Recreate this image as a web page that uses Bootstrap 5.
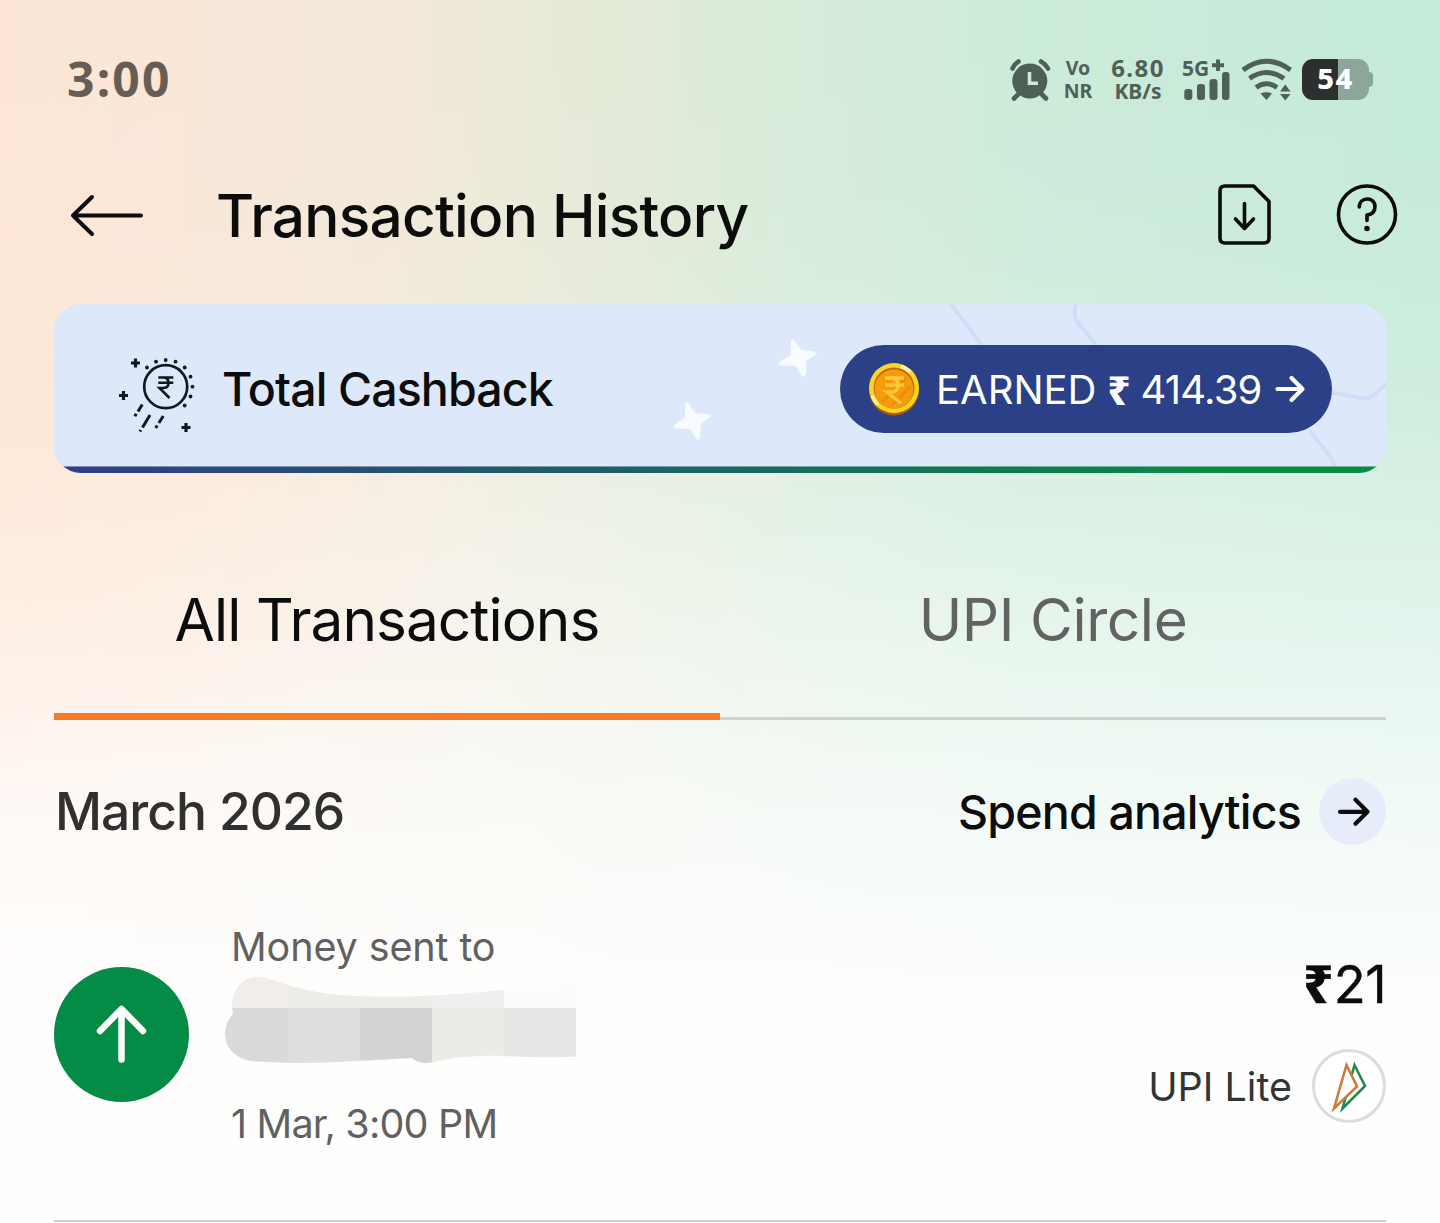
<!DOCTYPE html>
<html lang="en">
<head>
<meta charset="utf-8">
<meta name="viewport" content="width=device-width, initial-scale=1">
<title>Transaction History</title>
<link href="https://cdn.jsdelivr.net/npm/bootstrap@5.3.0/dist/css/bootstrap.min.css" rel="stylesheet">
<style>
body{font-family:Inter,"Noto Sans",sans-serif;color:#0b0c0b;white-space:nowrap;min-height:1223px;line-height:1;overflow:hidden;
background:radial-gradient(ellipse 480px 330px at 0 480px,rgba(254,228,208,.4),rgba(254,228,208,0)),linear-gradient(180deg,rgba(255,255,255,0) 0,rgba(255,255,255,.04) 200px,rgba(255,255,255,.18) 400px,rgba(255,255,255,.48) 600px,rgba(255,255,255,.76) 800px,rgba(255,255,255,.95) 1000px,#fefefe 1150px),linear-gradient(90deg,#fde6d6 0,#f9e7d8 200px,#f0e9d9 440px,#e3ead8 620px,#d8ebd9 780px,#ccebd9 1020px,#c5ead8 1440px)}
svg{display:block;flex:none;overflow:visible}
.ink{fill:none;stroke:currentColor;stroke-linecap:round;stroke-linejoin:round}
.rupee{font-family:"Noto Sans",sans-serif;font-weight:800;letter-spacing:0}
.status-bar{height:158px;padding:0 67px;font-family:"Noto Sans",sans-serif;font-weight:700;color:#4f6056}
.clock{font-size:48px;color:#665e55;letter-spacing:2.2px}
.duo{height:44px;padding-top:1px;text-align:center;justify-content:space-between}
.duo span{line-height:20px;display:block}
.vo{width:30px;margin-left:12px;font-size:19.500px}
.rate{width:56px;margin-left:17px;font-size:21px}
.rate .fig{font-size:24px;letter-spacing:1.400px}
.cell{width:48px;margin-left:16px;text-align:left;font-size:21px}
.wifi{margin-left:12px}
.battery{width:67px;height:41px;border-radius:11px;margin:0 4px 0 10px;background:linear-gradient(90deg,#2b302e 36px,#8ea69a 36px);color:#fff;font-size:29px;font-weight:800;position:relative;letter-spacing:1.500px;padding-bottom:4px}
.battery::after{content:"";position:absolute;left:67px;top:13px;width:4px;height:15px;border-radius:0 4px 4px 0;background:#8ea69a}
.title-bar{height:114px;padding:0 42px 0 70px}
.screen-title{font-size:58.500px;font-weight:450;letter-spacing:-.75px;margin-left:72px;padding-top:2px}
.help{margin-left:65px}
.cashback{height:169px;border-radius:27px;background:#dee8fb;margin:32px 54px 0;padding:0 54px 0 64px;overflow:hidden;position:relative}
.cashback .art{position:absolute;left:0;top:0}
.cashback .stripe{position:absolute;left:0;right:0;bottom:0;height:7px;background:linear-gradient(90deg,#303f88 0,#255270 25%,#1d6167 45%,#157159 62%,#0b8749 85%,#088a47 100%);border-top:1px solid rgba(255,255,255,.4)}
.burst{margin-top:10px}
.cash-label{font-size:46.500px;font-weight:450;letter-spacing:-.9px;margin-left:27px;padding-top:2px}
.earned{width:492px;height:88px;padding:0 27px 0 28px;background:#2b4087;color:#fff;font-size:40px;position:relative}
.earned span{padding-top:2px}
.earned .rupee{margin-left:11px}
.earned .value{letter-spacing:-.8px;margin-left:10px}
.tabs{margin:47px 54px 0;height:200px;border-bottom:3px solid #cfd1cf;font-size:58.500px;letter-spacing:-.95px}
.tabs .nav-link{color:#616261;padding:0;height:200px;border-radius:0;line-height:199px}
.tabs .nav-link+.nav-link{letter-spacing:-.4px}
.tabs .nav-link.active{color:#0b0c0b;border-bottom:7px solid #f47b27}
.month-row{margin:57px 54px 0;height:69px}
.month{font-size:51.500px;color:#2f302f;font-weight:450;letter-spacing:-.95px;margin-left:1px}
.spend{font-size:46.500px;font-weight:450;letter-spacing:-.8px;padding-top:2px}
.go{width:67px;height:67px;margin-left:18px;background:linear-gradient(180deg,#e4effa,#e8ebfa)}
.txn{margin:0 54px;height:376px;padding-top:80px;border-bottom:2px solid #cfcfcf}
.sent{width:135px;height:135px;background:#048c46;color:#fff;margin-top:41px}
.detail{margin-left:42px}
.detail .smudge{margin:9px 0 39px -6px}
.sub{font-size:39.500px;color:#616161;line-height:42px;letter-spacing:-.1px}
.when{letter-spacing:-.8px}
.amount{font-size:52.500px;font-weight:400;line-height:54px;margin-top:30px;letter-spacing:-.5px;-webkit-text-stroke:.4px}
.lite{font-size:39.500px;color:#333534;margin-top:38px}
.lite span{padding-top:3px}
.lite-logo{width:74px;height:74px;border:3px solid #d9dce3;background:#fff;margin-left:20px}
</style>
</head>
<body>
<header class="status-bar d-flex align-items-center justify-content-between">
  <span class="clock">3:00</span>
  <div class="d-flex align-items-center">
    <svg width="42" height="44" viewBox="1009 57 42 44"><circle cx="1029.800" cy="81" r="17.500" fill="#4f6056"/><g class="ink" stroke-width="4.600"><path d="M1012.500 68.500Q1014.500 64 1018.500 61.500M1041 61.500Q1045.500 64 1048 68.500M1014 98.500 1018.500 94M1046 98.500 1041.500 94"/></g><path d="M1029.500 72v11.200h8.500" fill="none" stroke="#cdebdc" stroke-width="3.600"/></svg>
    <div class="duo vo d-flex flex-column"><span>Vo</span><span>NR</span></div>
    <div class="duo rate d-flex flex-column"><span class="fig">6.80</span><span>KB/s</span></div>
    <div class="duo cell d-flex flex-column"><span>5G</span>
      <svg width="48" height="1" viewBox="1182 100 48 1"><g fill="#4f6056"><rect x="1184.300" y="89" width="8" height="11" rx="3"/><rect x="1197" y="84" width="8" height="16" rx="3"/><rect x="1209.500" y="79" width="8" height="21" rx="3"/><rect x="1222" y="72" width="7.500" height="28" rx="3"/></g><path d="M1218 59.500v11.500M1212 65.300h12" stroke="#4f6056" stroke-width="4"/></svg></div>
    <svg class="wifi" width="50" height="44" viewBox="1242 57 50 44"><g fill="none" stroke="#4f6056" stroke-width="5"><path d="M1243 70Q1266.500 52.500 1290.500 70M1249.500 78.500Q1266.500 66.500 1284 78.500M1256 87.500Q1266.500 80 1277 87.500"/></g><path d="M1260.500 93.500Q1266.500 91 1272 93.500L1266.500 100ZM1280 91.500h10.500L1285.300 84.500ZM1280 94h10.500L1285.300 100.500Z" fill="#4f6056"/></svg>
    <div class="battery d-flex align-items-center justify-content-center"><span>54</span></div>
  </div>
</header>
<div class="title-bar d-flex align-items-center">
  <svg width="74" height="44" viewBox="70 193 74 44" class="ink" stroke-width="4"><path d="M92 197 73 215.500 92 234M73 215.500H141"/></svg>
  <h1 class="screen-title mb-0">Transaction History</h1>
  <svg class="ink ms-auto" width="54" height="62" viewBox="1217 184 54 62" stroke-width="3.600"><path d="M1253.500 186H1225Q1220 186 1220 191V238Q1220 243 1225 243H1264Q1269 243 1269 238V201.500ZM1244.500 203.500V228M1235.500 219 1244.500 228.500 1253.500 219"/></svg>
  <svg class="ink help" width="62" height="62" viewBox="1336 184 62 62" stroke-width="3.600"><circle cx="1367" cy="214.500" r="28.500"/><path d="M1359.300 207C1359.300 196.500 1375 196.500 1375 206.500C1375 213 1371 214.500 1367 215V220.500"/><circle cx="1367" cy="228.500" r="2.800" fill="currentColor" stroke="none"/></svg>
</div>
<section class="cashback d-flex align-items-center">
  <svg class="art" width="1332" height="169" viewBox="54 304 1332 169"><g fill="none" stroke="#d0ddf8" stroke-width="4"><path d="M950 303 979 341Q981 344 981 350M1076 303Q1074 314 1075 317 1076 320 1079 324L1102 352M1322 391 1362 398Q1370 399 1374 395L1388 383M1309 430 1332 459Q1334.500 462 1333 470"/></g><g id="spark"><path d="M791 341Q792 338 794 340L801 350 814.500 351.500Q818 352 815.500 354.500L806.500 361 806 374Q804.500 379 801.500 375.500L796 366 781 365.500Q777.500 364.500 780.500 361.500L790.500 355Z" fill="#f8fbff"/></g><use href="#spark" x="-105.700" y="63"/></svg>
  <svg class="burst" width="77" height="76" viewBox="118 356 77 76"><g fill="none" stroke="#111820"><circle cx="165.700" cy="386.700" r="21.500" stroke-width="2.700"/><path d="M135.500 358.500v9M131 363h9M123.500 391v9M119 395.500h9M186 423v9M181.500 427.500h9" stroke-width="3.200"/><path d="M142.300 404.500 138 411.500M150 415 142.500 427.500M163.300 416 158.800 423M136.300 413.700 134.800 416.300M140.700 430 139.900 431.500M157.200 425.500 155.700 428" stroke-width="3"/><path d="M158.300 377.500H173.300M158.300 382.700H173.300M160 377.500H163Q168.500 377.500 168.500 382.700T163 388H159.500L169.500 398" stroke-width="2.600"/></g><g fill="#111820"><circle cx="147" cy="367.500" r="1.900"/><circle cx="156" cy="361.700" r="1.900"/><circle cx="165.700" cy="360" r="1.900"/><circle cx="175.500" cy="361.700" r="1.900"/><circle cx="184.700" cy="367.500" r="1.900"/><circle cx="190.500" cy="376.700" r="1.900"/><circle cx="192.500" cy="386.700" r="1.900"/><circle cx="190.500" cy="396.500" r="1.900"/><circle cx="184.700" cy="405.500" r="1.900"/></g></svg>
  <span class="cash-label">Total Cashback</span>
  <div class="earned rounded-pill d-flex align-items-center ms-auto">
    <svg width="52" height="54" viewBox="868 362 52 54"><clipPath id="rim"><circle cx="894" cy="388" r="25"/></clipPath><ellipse cx="894" cy="390" rx="25" ry="25.500" fill="#a5620c"/><circle cx="894" cy="388" r="25" fill="#ffd226"/><path d="M901 366 910 372M871.500 396 877 405" stroke="#fff0a0" stroke-width="5" clip-path="url(#rim)"/><circle cx="894" cy="388" r="20.500" fill="#b86a08"/><circle cx="894" cy="389" r="19.500" fill="#f59c0d"/><path d="M882 402 907 377M891 406 911 386" stroke="#ee8f06" stroke-width="3"/><path d="M885 378H904M885 385H904M887 378H891Q898 378 898 385T891 392H886.500L901 403" fill="none" stroke="#ffc637" stroke-width="3.400"/></svg>
    <span class="ms-3">EARNED</span><span class="rupee">₹</span><span class="value">414.39</span>
    <svg class="ink ms-auto" width="30" height="28" viewBox="1276 375 30 28" stroke-width="4.200"><path d="M1278.500 389H1303.500M1292.500 378 1303.500 389 1292.500 400"/></svg>
  </div>
  <div class="stripe"></div>
</section>
<nav class="nav nav-justified tabs"><a class="nav-link active">All Transactions</a><a class="nav-link">UPI Circle</a></nav>
<div class="month-row d-flex align-items-center"><span class="month">March 2026</span><span class="spend ms-auto">Spend analytics</span>
  <div class="go rounded-circle d-flex align-items-center justify-content-center"><svg class="ink" width="33" height="30" viewBox="1336 796.500 33 30" stroke-width="4.200"><path d="M1340 811.300H1367.500M1355.500 799.300 1367.500 811.300 1355.500 823.300"/></svg></div></div>
<div class="txn d-flex align-items-start">
  <div class="sent rounded-circle d-flex align-items-center justify-content-center"><svg class="ink" width="52" height="60" viewBox="95.500 1004.500 52 60" stroke-width="6.500"><path d="M121 1059V1009M99.500 1030.500 121 1008.500 142.500 1030.500"/></svg></div>
  <div class="detail">
    <div class="sub">Money sent to</div>
    <svg class="smudge" width="351" height="87" viewBox="225 977 351 87">
      <clipPath id="smudge"><path d="M232 1008C232 990 242 977 258 977C266 977 270 979.500 288 985C320 994.500 345 996.500 385 996.500C430 997 460 993.500 504 990L576 984V1056.500C540 1059 500 1055 480 1056C455 1057 445 1059.500 432 1062.500C424 1064 416 1062 412 1058C370 1060 340 1063 290 1063C275 1062.500 260 1062 250 1061C235 1058 225 1047 225 1034C225 1025 229 1018 233 1014Z"/></clipPath>
      <g clip-path="url(#smudge)" shape-rendering="crispEdges"><path d="M225 977h63v31h-63z" fill="#f0edeb"/><path d="M288 977h144v31H288z" fill="#ecece9"/><path d="M432 977h72v31h-72z" fill="#efefed"/><path d="M504 977h72v31h-72z" fill="#fcfcfa"/><path d="M225 1008h63v60h-63z" fill="#dadad8"/><path d="M288 1008h72v60h-72z" fill="#dfdedd"/><path d="M360 1008h72v60h-72z" fill="#d4d3d1"/><path d="M432 1008h72v60h-72z" fill="#ebece8"/><path d="M504 1008h72v60h-72z" fill="#e8e7e6"/></g>
    </svg>
    <div class="sub when">1 Mar, 3:00 PM</div>
  </div>
  <div class="ms-auto d-flex flex-column align-items-end">
    <div class="amount"><span class="rupee">₹</span>21</div>
    <div class="lite d-flex align-items-center"><span>UPI Lite</span>
      <div class="lite-logo rounded-circle d-flex align-items-center justify-content-center"><svg width="36" height="50" viewBox="1331 1062 36 50" fill="none" stroke-width="2.600"><path d="M1354.500 1066 1365 1087 1342.500 1109.500Z" stroke="#24894e"/><path d="M1346.500 1066 1357 1087.500 1334 1109.500Z" fill="#fff" stroke="#d07a3a"/></svg></div></div>
  </div>
</div>
<script src="https://cdn.jsdelivr.net/npm/bootstrap@5.3.0/dist/js/bootstrap.bundle.min.js"></script>
</body>
</html>
